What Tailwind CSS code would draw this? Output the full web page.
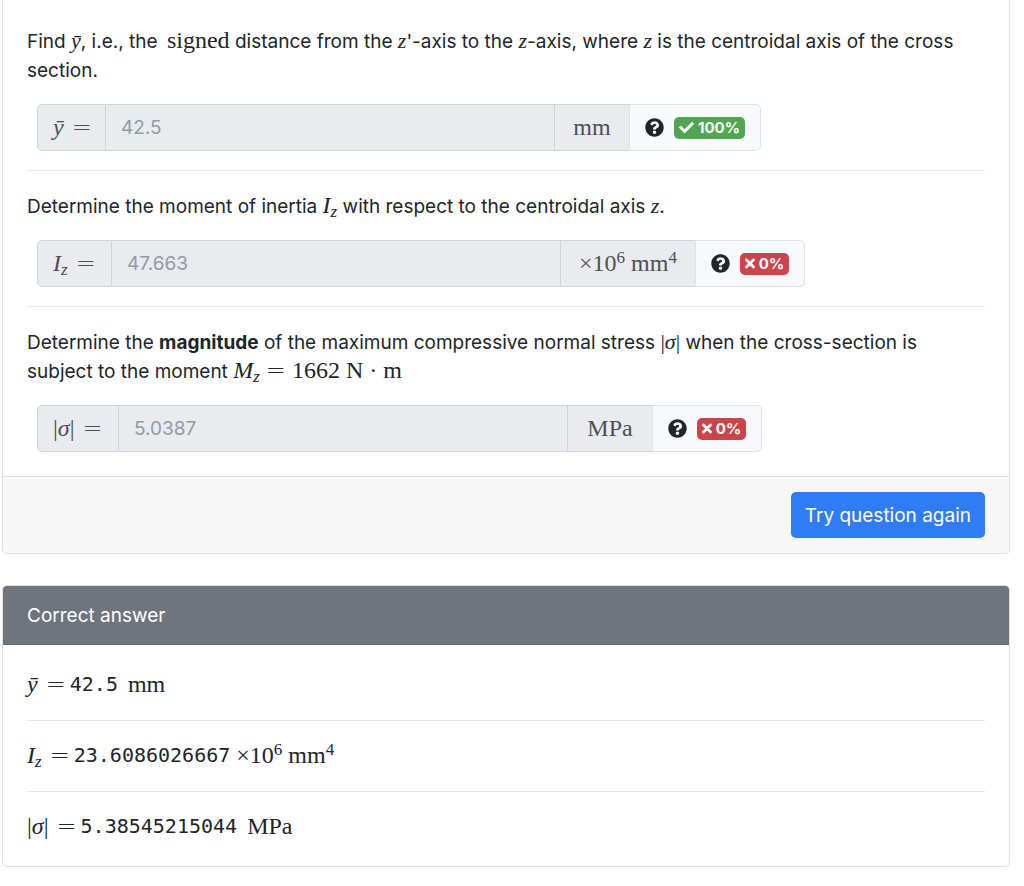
<!DOCTYPE html>
<html lang="en">
  <head>
    <meta charset="UTF-8" />
    <meta name="viewport" content="width=device-width, initial-scale=1.0" />
    <title>Centroid and bending stress</title>
    <script src="https://cdn.jsdelivr.net/npm/@tailwindcss/browser@4"></script>
  </head>

  <body class="bg-white pl-[2px] pr-[14px] pb-5 font-['Inter',sans-serif] text-[19px] leading-[29px] text-[#212529]">
    <svg class="hidden">
      <symbol id="icon-question" viewBox="0 0 512 512">
        <path d="M504 256c0 137-111 248-248 248S8 393 8 256C8 119 119 8 256 8s248 111 248 248zM262.700 90c-54.500 0-89.300 23-116.500 63.800-3.500 5.300-2.400 12.400 2.700 16.300l34.700 26.300c5.200 3.900 12.600 3 16.700-2.100 17.900-22.700 30.100-35.800 57.300-35.800 20.400 0 45.700 13.100 45.700 33 0 15-12.400 22.700-32.500 34C247.100 238.500 216 254.900 216 296v4c0 6.600 5.400 12 12 12h56c6.600 0 12-5.400 12-12v-1.300c0-28.500 83.200-29.600 83.200-106.700 0-58-60.200-102-116.500-102zM256 338c-25.400 0-46 20.600-46 46 0 25.400 20.600 46 46 46s46-20.600 46-46c0-25.400-20.600-46-46-46z" />
      </symbol>
      <symbol id="icon-check" viewBox="0 0 512 512">
        <path d="M173.900 439.400l-166.400-166.400c-10-10-10-26.200 0-36.200l36.200-36.200c10-10 26.200-10 36.200 0L192 312.700 432.100 72.600c10-10 26.200-10 36.200 0l36.200 36.200c10 10 10 26.200 0 36.200l-294.400 294.400c-10 10-26.200 10-36.200 0z" />
      </symbol>
      <symbol id="icon-times" viewBox="0 0 352 512">
        <path d="M242.700 256l100.100-100.100c12.300-12.300 12.300-32.200 0-44.500l-22.200-22.200c-12.300-12.300-32.200-12.300-44.500 0L176 189.300 75.900 89.200c-12.300-12.300-32.200-12.300-44.500 0L9.200 111.500c-12.300 12.300-12.300 32.200 0 44.500L109.300 256 9.200 356.100c-12.300 12.300-12.300 32.200 0 44.500l22.200 22.200c12.300 12.300 32.200 12.300 44.500 0L176 322.700l100.100 100.100c12.300 12.300 32.200 12.300 44.500 0l22.200-22.200c12.300-12.300 12.300-32.200 0-44.500L242.700 256z" />
      </symbol>
    </svg>

    <!-- Question -->
    <section class="rounded-b-[5px] border-x border-b border-[#dfdfdf]">
      <div class="px-6 pt-[27px] pb-6">
        <p>
          Find <i class="font-['Liberation_Serif',serif] text-[22px] leading-none">ȳ</i>, i.e., the
          <span class="ml-1 font-['Liberation_Serif',serif] text-[24px] leading-none">signed</span>
          distance from the <i class="font-['Liberation_Serif',serif] text-[22px] leading-none">z</i>'-axis to the
          <i class="font-['Liberation_Serif',serif] text-[22px] leading-none">z</i>-axis, where
          <i class="font-['Liberation_Serif',serif] text-[22px] leading-none">z</i> is the centroidal axis of the cross section.
        </p>
        <div class="mt-[19px] ml-[10px] flex h-[47px]">
          <label for="ybar" class="flex w-[69px] items-center rounded-l-[5px] border border-[#ced4da] bg-[#eaebef] pl-[15px] font-['Liberation_Serif',serif] text-[24px] text-[#495057]"><i>ȳ</i><span class="ml-2 font-['DejaVu_Sans',sans-serif] font-extralight">=</span></label>
          <input id="ybar" type="text" value="42.5" disabled class="w-[448px] min-w-0 border-y border-[#ced4da] bg-[#eaebef] px-[15px] text-[#8f9ba7]" />
          <span class="flex w-[75px] items-center justify-center border border-r-0 border-[#ced4da] bg-[#eaebef] font-['Liberation_Serif',serif] text-[24px] text-[#495057]">mm</span>
          <span class="flex items-center gap-[10px] rounded-r-[5px] border border-[#dee2e6] bg-[#f8f9fb] px-[15px]">
            <button type="button" aria-label="Help"><svg class="size-[19px] fill-[#212529]"><use href="#icon-question" /></svg></button>
            <span class="flex h-[22px] w-[71px] items-center justify-center gap-1 rounded-[5px] bg-[#52a551] text-[15px] font-bold text-white"><svg class="size-[15px] fill-white"><use href="#icon-check" /></svg>100%</span>
          </span>
        </div>

        <hr class="mt-[19px] mb-[21px] border-[#e5e5e5]" />

        <p>
          Determine the moment of inertia
          <span class="font-['Liberation_Serif',serif] text-[24px] leading-none"><i>I</i><sub class="text-[17px]"><i>z</i></sub></span>
          with respect to the centroidal axis <i class="font-['Liberation_Serif',serif] text-[22px] leading-none">z</i>.
        </p>
        <div class="mt-[19px] ml-[10px] flex h-[47px]">
          <label for="inertia" class="flex w-[75px] items-center rounded-l-[5px] border border-[#ced4da] bg-[#eaebef] pl-[15px] font-['Liberation_Serif',serif] text-[24px] text-[#495057]"><span><i>I</i><sub class="text-[17px]"><i>z</i></sub></span><span class="ml-2 font-['DejaVu_Sans',sans-serif] font-extralight">=</span></label>
          <input id="inertia" type="text" value="47.663" disabled class="w-[448px] min-w-0 border-y border-[#ced4da] bg-[#eaebef] px-[15px] text-[#8f9ba7]" />
          <span class="flex w-[135px] items-center justify-center border border-r-0 border-[#ced4da] bg-[#eaebef] font-['Liberation_Serif',serif] text-[24px] text-[#495057]"><span>×10<sup class="text-[17px]">6</sup> mm<sup class="text-[17px]">4</sup></span></span>
          <span class="flex items-center gap-[10px] rounded-r-[5px] border border-[#dee2e6] bg-[#f8f9fb] px-[15px]">
            <button type="button" aria-label="Help"><svg class="size-[19px] fill-[#212529]"><use href="#icon-question" /></svg></button>
            <span class="flex h-[22px] w-[49px] items-center justify-center gap-1 rounded-[5px] bg-[#cc444b] text-[15px] font-bold text-white"><svg class="h-[15px] w-[10px] fill-white"><use href="#icon-times" /></svg>0%</span>
          </span>
        </div>

        <hr class="mt-[19px] mb-[21px] border-[#e5e5e5]" />

        <p>
          Determine the <strong>magnitude</strong> of the maximum compressive normal stress
          <span class="font-['Liberation_Serif',serif] text-[22px] leading-none">|<i>σ</i>|</span>
          when the cross-section is subject to the moment
          <span class="font-['Liberation_Serif',serif] text-[24px] leading-none"><i>M</i><sub class="text-[17px]"><i>z</i></sub> <span class="font-['DejaVu_Sans',sans-serif] font-extralight">=</span> 1662 N · m</span>
        </p>
        <div class="mt-[19px] ml-[10px] flex h-[47px]">
          <label for="sigma" class="flex w-[82px] items-center rounded-l-[5px] border border-[#ced4da] bg-[#eaebef] pl-[15px] font-['Liberation_Serif',serif] text-[24px] text-[#495057]"><span>|<i>σ</i>|</span><span class="ml-2 font-['DejaVu_Sans',sans-serif] font-extralight">=</span></label>
          <input id="sigma" type="text" value="5.0387" disabled class="w-[448px] min-w-0 border-y border-[#ced4da] bg-[#eaebef] px-[15px] text-[#8f9ba7]" />
          <span class="flex w-[85px] items-center justify-center border border-r-0 border-[#ced4da] bg-[#eaebef] font-['Liberation_Serif',serif] text-[24px] text-[#495057]">MPa</span>
          <span class="flex items-center gap-[10px] rounded-r-[5px] border border-[#dee2e6] bg-[#f8f9fb] px-[15px]">
            <button type="button" aria-label="Help"><svg class="size-[19px] fill-[#212529]"><use href="#icon-question" /></svg></button>
            <span class="flex h-[22px] w-[49px] items-center justify-center gap-1 rounded-[5px] bg-[#cc444b] text-[15px] font-bold text-white"><svg class="h-[15px] w-[10px] fill-white"><use href="#icon-times" /></svg>0%</span>
          </span>
        </div>
      </div>

      <div class="flex justify-end rounded-b-[5px] border-t border-[#dfdfdf] bg-[#f7f7f7] px-6 py-[15px]">
        <button type="button" class="rounded-[5px] bg-[#2f7cf6] px-[14px] pt-[9px] pb-2 text-white">Try question again</button>
      </div>
    </section>

    <!-- Answer -->
    <section class="mt-[31px] rounded-[5px] border border-[#dfdfdf]">
      <h2 class="rounded-t-[4px] border-b border-[#646b72] bg-[#6e757c] px-6 pt-[15px] pb-[14px] text-white">Correct answer</h2>
      <div class="px-6 py-[25px]">
        <div class="flex h-[29px] items-center font-['Liberation_Serif',serif] text-[24px]">
          <i>ȳ</i><span class="ml-2 font-['DejaVu_Sans',sans-serif] font-extralight">=</span><span class="ml-1 font-['DejaVu_Sans_Mono',monospace] text-[20px]">42.5</span><span class="ml-[10px]">mm</span>
        </div>
        <hr class="mt-[21px] mb-5 border-[#e5e5e5]" />
        <div class="flex h-[29px] items-center font-['Liberation_Serif',serif] text-[24px]">
          <span><i>I</i><sub class="text-[17px]"><i>z</i></sub></span><span class="ml-2 font-['DejaVu_Sans',sans-serif] font-extralight">=</span><span class="ml-1 font-['DejaVu_Sans_Mono',monospace] text-[20px]">23.6086026667</span><span class="ml-[6px]">×10<sup class="text-[17px]">6</sup> mm<sup class="text-[17px]">4</sup></span>
        </div>
        <hr class="mt-[21px] mb-5 border-[#e5e5e5]" />
        <div class="flex h-[29px] items-center font-['Liberation_Serif',serif] text-[24px]">
          <span>|<i>σ</i>|</span><span class="ml-2 font-['DejaVu_Sans',sans-serif] font-extralight">=</span><span class="ml-1 font-['DejaVu_Sans_Mono',monospace] text-[20px]">5.38545215044</span><span class="ml-[10px]">MPa</span>
        </div>
      </div>
    </section>
  </body>
</html>
